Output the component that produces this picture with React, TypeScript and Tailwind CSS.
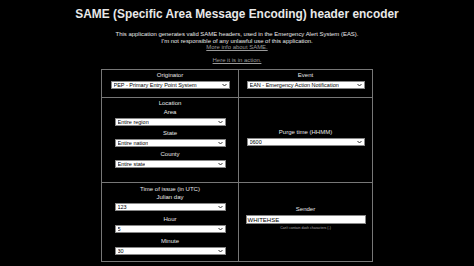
import React from "react";

const font = { fontFamily: '"Liberation Sans", Arial, sans-serif' };

function FakeSelect({ value, w }: { value: string; w: string }) {
  return (
    <div
      className={`${w} h-[8px] bg-white text-black text-[5.5px] leading-[8px] pl-[2px] pr-[2px] flex items-center justify-between border border-[#888]`}
    >
      <span className="truncate">{value}</span>
      <svg width="5" height="4" viewBox="0 0 10 8" className="shrink-0">
        <path d="M1 2 L5 6 L9 2" stroke="#333" strokeWidth="2" fill="none" />
      </svg>
    </div>
  );
}

function Field({ label, value, w }: { label: string; value: string; w: string }) {
  return (
    <div className="flex flex-col items-center">
      <div className="h-[7px] leading-[7px] text-[6px]">{label}</div>
      <div className="mt-[2px]">
        <FakeSelect value={value} w={w} />
      </div>
    </div>
  );
}

export default function App() {
  return (
    <div className="min-h-screen bg-black text-[#e8e8e8] overflow-hidden" style={font}>
      <h1 className="text-center font-bold text-[11.9px] leading-[14px] pt-[7px]">
        SAME (Specific Area Message Encoding) header encoder
      </h1>
      <div className="text-center text-[5.95px] leading-[6.5px] mt-[10px]">
        <p>This application generates valid SAME headers, used in the Emergency Alert System (EAS).</p>
        <p>I'm not responsible of any unlawful use of this application.</p>
        <p>
          <a className="underline text-[#9a9a9a]">More info about SAME.</a>
        </p>
        <p className="mt-[6px]">
          <a className="underline text-[#9a9a9a]">Here it is in action.</a>
        </p>
      </div>

      <div className="mx-auto mt-[6px] w-[272px] border border-[#777] grid grid-cols-[137px_133px]">
        {/* Row 1 */}
        <div className="border-r border-b border-[#777] h-[28px] pt-[2px] flex flex-col items-center">
          <Field label="Originator" value="PEP - Primary Entry Point System" w="w-[119px]" />
        </div>
        <div className="border-b border-[#777] h-[28px] pt-[2px] flex flex-col items-center">
          <Field label="Event" value="EAN - Emergency Action Notification" w="w-[118px]" />
        </div>

        {/* Row 2 */}
        <div className="border-r border-b border-[#777] h-[85px] pt-[1px] flex flex-col items-center">
          <div className="h-[8px] leading-[8px] text-[6px]">Location</div>
          <div className="mt-[2px] flex flex-col gap-[4px]">
            <Field label="Area" value="Entire region" w="w-[111px]" />
            <Field label="State" value="Entire nation" w="w-[111px]" />
            <Field label="County" value="Entire state" w="w-[111px]" />
          </div>
        </div>
        <div className="border-b border-[#777] h-[85px] flex flex-col items-center justify-center pb-[5px]">
          <Field label="Purge time (HHMM)" value="0600" w="w-[118px]" />
        </div>

        {/* Row 3 */}
        <div className="border-r border-[#777] h-[78px] pt-[2px] flex flex-col items-center">
          <div className="h-[8px] leading-[8px] text-[6px]">Time of issue (in UTC)</div>
          <div className="mt-[1px] flex flex-col gap-[5px]">
            <Field label="Julian day" value="123" w="w-[111px]" />
            <Field label="Hour" value="5" w="w-[111px]" />
            <Field label="Minute" value="30" w="w-[111px]" />
          </div>
        </div>
        <div className="h-[78px] flex flex-col items-center pt-[23px]">
          <div className="h-[7px] leading-[7px] text-[6px]">Sender</div>
          <div className="mt-[2px] w-[120px] h-[9px] bg-white text-black text-[6px] leading-[9px] pl-[1px] border border-[#888]">
            WHITEHSE
          </div>
          <div className="mt-[2px] text-[3.5px] leading-[4px] text-[#aaa]">Can't contain dash characters (-)</div>
        </div>
      </div>
    </div>
  );
}
